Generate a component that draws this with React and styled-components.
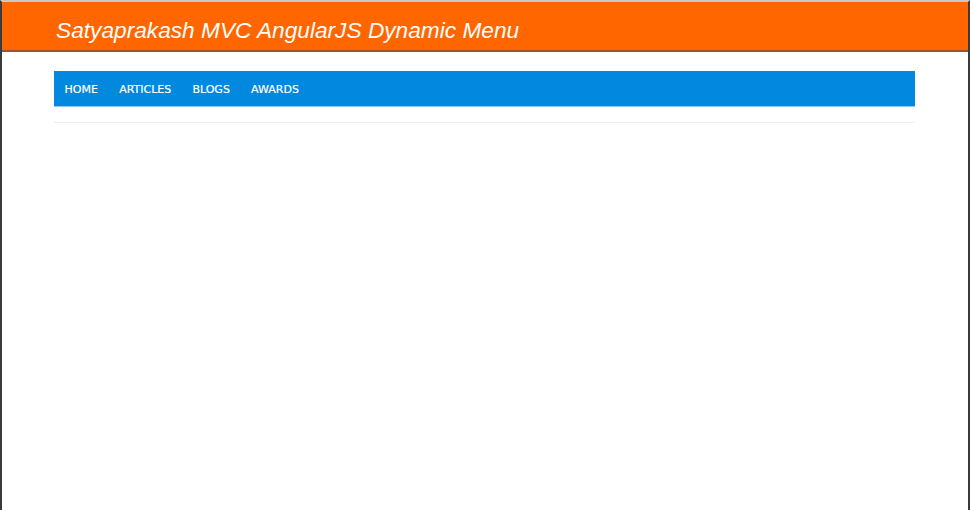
import React from 'react'
import styled, { createGlobalStyle } from 'styled-components';

const GlobalStyle = createGlobalStyle`
    html, body {
        margin: 0;
        padding: 0;
        background: #ffffff;
    }
`;

const Page = styled.div`
    box-sizing: border-box;
    width: 970px;
    height: 510px;
    border-left: 2px solid #3a3a3a;
    border-right: 2px solid #3a3a3a;
    border-top: 2px solid #c8c8c8;
    background: #ffffff;
    overflow: hidden;
`;

const Header = styled.header`
    height: 48px;
    background-color: #ff6600;
    border-bottom: 2px solid #a0522d;
    display: flex;
    align-items: center;
    padding-left: 54px;
`;

const Title = styled.h1`
    margin: 0;
    font-family: "Liberation Sans", Arial, sans-serif;
    font-style: italic;
    font-weight: normal;
    font-size: 22.7px;
    color: #ffffff;
    padding-top: 8px;
`;

const Content = styled.div`
    padding: 19px 53px 0 52px;
`;

const NavBar = styled.nav`
    height: 35px;
    background-color: #0288de;
    border-bottom: 1px solid #8fcaf0;
    display: flex;
    align-items: center;
    padding-left: 0;
`;

const NavItem = styled.a`
    font-family: "Comic Sans MS", "DejaVu Sans", sans-serif;
    font-size: 11px;
    color: #ffffff;
    text-transform: uppercase;
    text-decoration: none;
    padding: 2px 10.6px 0;
    -webkit-text-stroke: 0.2px #ffffff;
    cursor: pointer;
`;

const Rule = styled.hr`
    margin: 15px 0 0 0;
    border: 0;
    border-top: 1px solid #eeeeee;
`;

const menu = ['Home', 'Articles', 'Blogs', 'Awards'];

export default function App() {
    return (
        <>
            <GlobalStyle />
            <Page>
                <Header>
                    <Title>Satyaprakash MVC AngularJS Dynamic Menu</Title>
                </Header>
                <Content>
                    <NavBar>
                        {menu.map((item) => (
                            <NavItem key={item}>{item}</NavItem>
                        ))}
                    </NavBar>
                    <Rule />
                </Content>
            </Page>
        </>
    )
}
